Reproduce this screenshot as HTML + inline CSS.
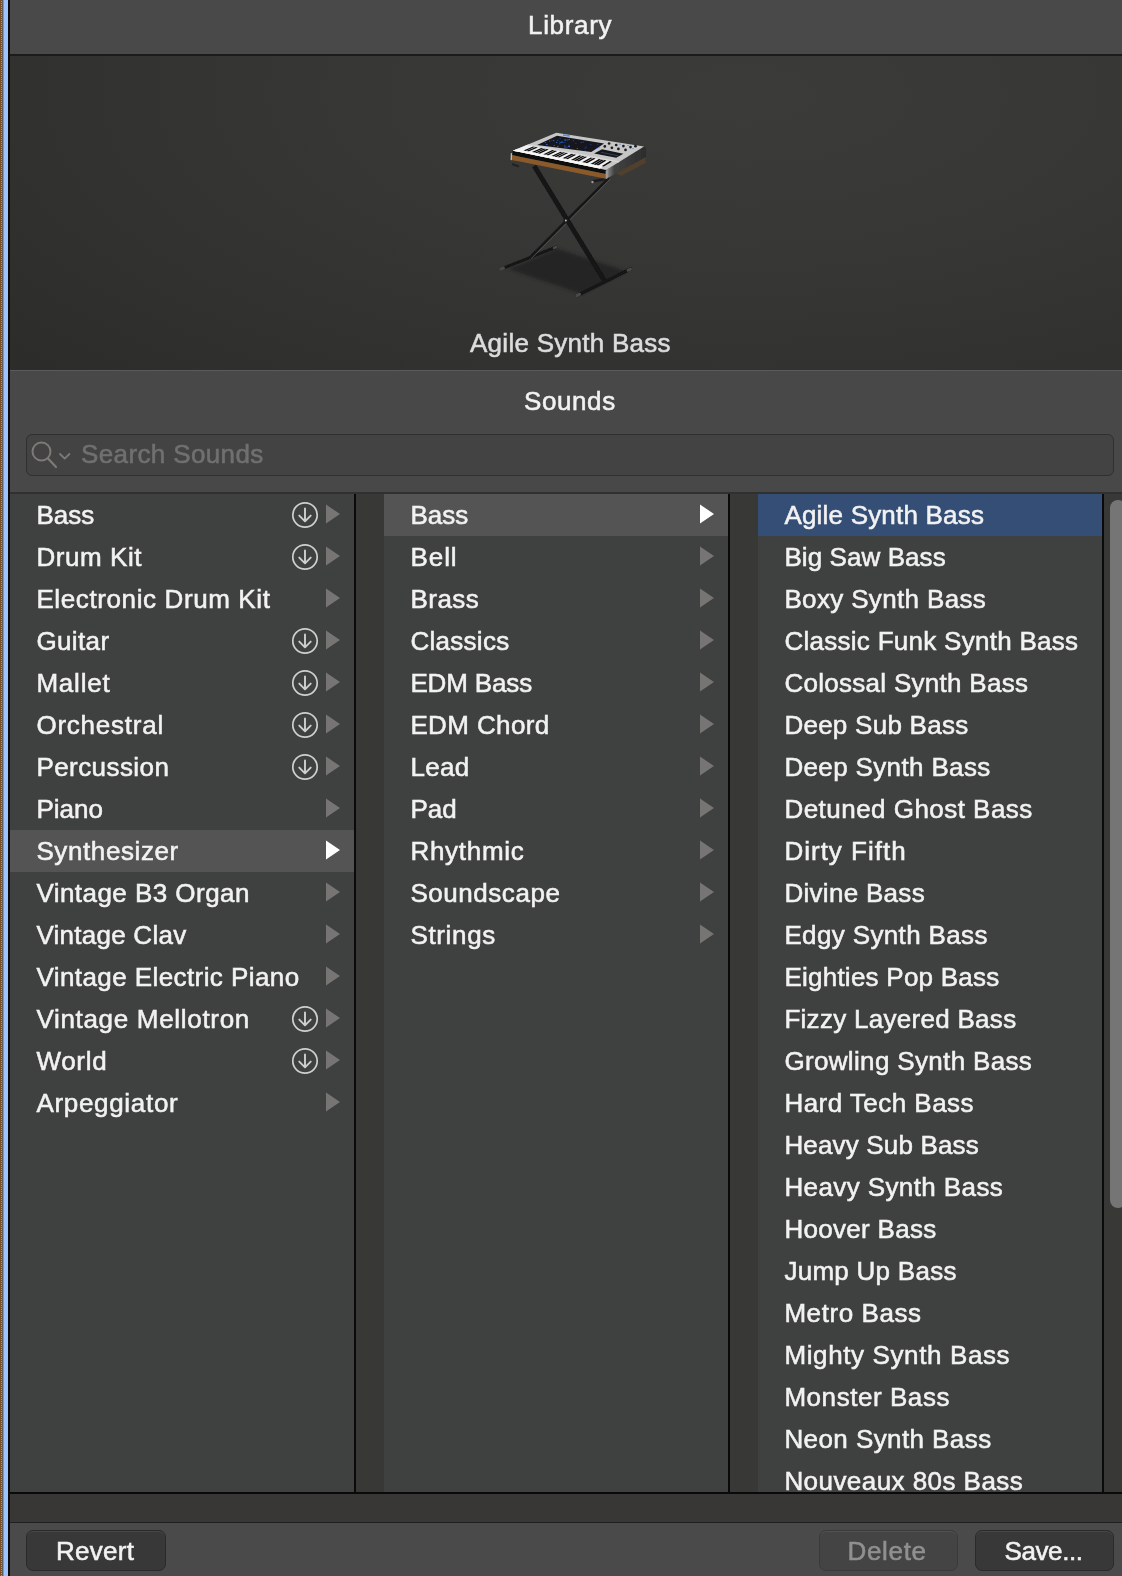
<!DOCTYPE html>
<html lang="en"><head><meta charset="utf-8"><title>Library</title>
<style>
html,body{margin:0;padding:0;background:#3f4040;}
body{width:1122px;height:1576px;position:relative;overflow:hidden;font-family:"Liberation Sans",sans-serif;font-size:26px;color:#f2f2f2;}
.t{white-space:nowrap;display:inline-block;-webkit-text-stroke:0.55px currentColor;}
.edge-brown{position:absolute;left:0;top:0;width:4px;height:1576px;background:linear-gradient(90deg,#7d4f22 0,#7d4f22 1px,transparent 1px),#7d4f22;}
.edge-brown:before{content:"";position:absolute;left:1px;top:0;width:1px;height:1576px;background:repeating-linear-gradient(180deg,#7d4f22 0,#7d4f22 1px,#a8927c 1px,#a8927c 2px);}
.edge-brown:after{content:"";position:absolute;left:2px;top:0;width:2px;height:1576px;background:linear-gradient(90deg,#5f5f5f 0,#5f5f5f 1px,#8e9199 1px,#8e9199 2px);}
.edge-blue{position:absolute;left:4px;top:0;width:4px;height:1576px;background:#9dc4fd;}
.edge-black{position:absolute;left:8px;top:0;width:2px;height:1576px;background:#0d0c0b;}
.panel{position:absolute;left:10px;top:0;width:1112px;height:1576px;overflow:hidden;will-change:transform;}
.titlebar{position:absolute;left:0;top:0;width:1112px;height:54px;background:#494949;border-bottom:2px solid #1b1b1b;}
.titlebar .t{position:absolute;left:518px;top:9.6px;line-height:30px;}
.hero{position:absolute;left:0;top:56px;width:1112px;height:314px;background:radial-gradient(ellipse 950px 400px at 66% 12%,#3b3b3a 0%,#373736 40%,#313130 75%,#2c2c2b 100%);}
.hero svg.synth{position:absolute;left:460px;top:44px;}
.patch{position:absolute;left:0;top:270px;width:1112px;height:34px;color:#dcdcdc;}
.patch .t{position:absolute;left:460px;top:0;line-height:34px;}
.sounds{position:absolute;left:0;top:370px;width:1112px;height:122px;background:#484848;border-top:1px solid #5a5a5a;box-sizing:border-box;}
.sounds .t{position:absolute;left:514px;top:15px;line-height:30px;}
.search{position:absolute;left:16px;top:434px;width:1086px;height:40px;border-radius:6px;background:#434343;border:1px solid #303030;box-sizing:content-box;}
.search .mag{position:absolute;left:3px;top:4px;}
.search .ph{position:absolute;left:54px;top:2px;line-height:34px;color:#707070;}
.lists{position:absolute;left:0;top:492px;width:1112px;height:1000px;background:#3f4040;border-top:2px solid #303030;box-sizing:border-box;overflow:hidden;}
.col{position:absolute;top:0;height:998px;background:#3f4040;}
.c1{left:0;width:344px;}
.c2{left:374px;width:344px;}
.c3{left:748px;width:344px;}
.row{position:relative;height:42px;width:344px;}
.row .t{position:absolute;left:26.4px;top:5px;line-height:32px;}
.row.sel{background:#545454;}
.row.selb{background:#354e75;}
.row .dl{position:absolute;left:281px;top:7px;}
.row .tri{position:absolute;left:316px;top:10px;}
.vline{position:absolute;top:0;width:2px;height:998px;background:#0a0a0a;}
.v1{left:344px}.v2{left:718px}.v3{left:1092px}
.gap{position:absolute;top:0;width:28px;height:998px;background:#383837;}
.g1{left:346px}.g2{left:720px}.g3{left:1094px;width:18px;}
.thumb{position:absolute;left:6px;top:6px;width:16px;height:708px;border-radius:8px;background:#757575;}
.hline{position:absolute;left:0;top:1492px;width:1112px;height:2px;background:#0a0a0a;}
.band{position:absolute;left:0;top:1494px;width:1112px;height:28px;background:#383736;}
.hline2{position:absolute;left:0;top:1522px;width:1112px;height:1px;background:#202020;}
.footer{position:absolute;left:0;top:1523px;width:1112px;height:53px;background:#4a4a4a;}
.btn{position:absolute;top:7px;height:41px;width:139px;border-radius:7px;background:#383838;border:1px solid #2a2a2a;box-sizing:border-box;box-shadow:0 1px 0 rgba(255,255,255,0.08) inset;}
.btn .t{position:absolute;top:3.8px;line-height:32px;}
.btn.dis{background:#444444;border-color:#3a3a3a;color:#909090;}
.b-revert{left:16px;width:140px;}
.b-delete{left:809px;}
.b-save{left:965px;}
.b-revert .t{left:29px}.b-delete .t{left:27.5px}.b-save .t{left:28.5px}

</style></head>
<body>
<div class="edge-brown"></div><div class="edge-blue"></div><div class="edge-black"></div>
<div class="panel">
<div class="titlebar"><span class="t" id="t-title" style="letter-spacing:0.667px">Library</span></div>
<div class="hero"><svg class="synth" width="220" height="220" viewBox="0 0 220 220"><defs><pattern id="dots" width="2" height="2" patternUnits="userSpaceOnUse"><rect width="2" height="2" fill="#2b2b2b"/><rect width="1" height="1" fill="#1c1c1c"/></pattern><linearGradient id="side" x1="0" y1="0" x2="1" y2="0"><stop offset="0" stop-color="#a8a8a8"/><stop offset="0.07" stop-color="#767676"/><stop offset="0.2" stop-color="#424242"/><stop offset="1" stop-color="#2c2c2c"/></linearGradient><filter id="soft" x="-5%" y="-5%" width="110%" height="110%"><feGaussianBlur stdDeviation="0.35"/></filter><filter id="sh" x="-10%" y="-10%" width="120%" height="120%"><feGaussianBlur stdDeviation="1.6"/></filter></defs><polygon points="38.5,169.1 87,148.4 156.9,171.3 111.3,194.1" fill="#222222" opacity="0.85" filter="url(#sh)"/><g filter="url(#soft)"><line x1="30.7" y1="169.1" x2="86.3" y2="147" stroke="#171717" stroke-width="3" stroke-linecap="round"/><line x1="30.7" y1="169.1" x2="33.5" y2="168" stroke="#484848" stroke-width="3" stroke-linecap="round"/><line x1="84" y1="147.9" x2="86.3" y2="147" stroke="#484848" stroke-width="2.6" stroke-linecap="round"/><line x1="139" y1="78" x2="59.9" y2="157.7" stroke="#151515" stroke-width="2.8"/><line x1="140.2" y1="79" x2="61.2" y2="158.6" stroke="#6a6a6a" stroke-width="0.7"/><line x1="64.2" y1="66" x2="134.8" y2="181.2" stroke="#131313" stroke-width="4.8"/><line x1="107" y1="195.5" x2="160.5" y2="169.1" stroke="#141414" stroke-width="3.4" stroke-linecap="round"/><line x1="107" y1="195.5" x2="109.5" y2="194.3" stroke="#484848" stroke-width="3.2" stroke-linecap="round"/><line x1="158" y1="170.3" x2="160.5" y2="169.1" stroke="#484848" stroke-width="3" stroke-linecap="round"/><circle cx="95.8" cy="120.6" r="2.6" fill="#1a1a1a"/><circle cx="95.8" cy="120.6" r="1" fill="#bdbdbd"/><line x1="42" y1="64" x2="49" y2="66.5" stroke="#222" stroke-width="2.2"/><line x1="122" y1="81.5" x2="138" y2="78.5" stroke="#1c1c1c" stroke-width="2.6"/><circle cx="122.5" cy="82" r="1.2" fill="#9a9a9a"/><polygon points="146,73 175.5,56 175.5,63 151,76" fill="#7a4a1e" opacity="0.38"/><polygon points="136.2,69.9 174,46.4 176,48.2 176,57 139,77.2 136.2,78.8" fill="url(#side)"/><polygon points="42.8,50.7 136.2,69.9 135.9,74.1 42.0,55.1" fill="#0e0e0e" /><polygon points="41.9,55.1 135.9,74.1 135.6,78.7 41.2,59.9" fill="#8b5a2b" /><polygon points="40.8,53.2 42.2,52.9 41.9,60.3 40.6,59.9" fill="#bdbdbd" /><polygon points="135.6,70.9 137.6,70.1 137.6,78.3 135.6,79.1" fill="#9c9c9c" /><polygon points="42.8,50.7 136.2,69.9 174.0,46.4 86.3,32.8" fill="#c6c6c6" /><polygon points="42.8,50.7 129.7,68.6 141.9,61.2 56.7,45.0" fill="#f0f0f0" /><polygon points="53.5,50.5 55.7,50.9 65.2,46.8 63.0,46.4" fill="#0c0c0c" /><polygon points="56.3,51.0 58.5,51.5 67.9,47.4 65.7,46.9" fill="#0c0c0c" /><polygon points="61.9,52.1 64.1,52.6 73.4,48.4 71.2,48.0" fill="#0c0c0c" /><polygon points="64.6,52.7 66.9,53.1 76.2,48.9 74.0,48.5" fill="#0c0c0c" /><polygon points="67.4,53.3 69.7,53.7 78.9,49.5 76.7,49.0" fill="#0c0c0c" /><polygon points="73.0,54.4 75.2,54.8 84.4,50.5 82.2,50.1" fill="#0c0c0c" /><polygon points="75.8,54.9 78.0,55.4 87.2,51.0 85.0,50.6" fill="#0c0c0c" /><polygon points="81.4,56.1 83.6,56.5 92.7,52.1 90.5,51.7" fill="#0c0c0c" /><polygon points="84.1,56.6 86.4,57.1 95.4,52.6 93.2,52.2" fill="#0c0c0c" /><polygon points="86.9,57.2 89.2,57.6 98.2,53.1 96.0,52.7" fill="#0c0c0c" /><polygon points="92.5,58.3 94.7,58.8 103.7,54.2 101.5,53.8" fill="#0c0c0c" /><polygon points="95.3,58.9 97.5,59.3 106.4,54.7 104.2,54.3" fill="#0c0c0c" /><polygon points="100.9,60.0 103.1,60.4 111.9,55.8 109.7,55.3" fill="#0c0c0c" /><polygon points="103.7,60.5 105.9,61.0 114.7,56.3 112.5,55.9" fill="#0c0c0c" /><polygon points="106.4,61.1 108.7,61.6 117.4,56.8 115.2,56.4" fill="#0c0c0c" /><polygon points="112.0,62.2 114.2,62.7 122.9,57.8 120.7,57.4" fill="#0c0c0c" /><polygon points="114.8,62.8 117.0,63.2 125.7,58.4 123.5,58.0" fill="#0c0c0c" /><polygon points="120.4,63.9 122.6,64.4 131.1,59.4 128.9,59.0" fill="#0c0c0c" /><polygon points="123.2,64.5 125.4,64.9 133.9,59.9 131.7,59.5" fill="#0c0c0c" /><polygon points="125.9,65.0 128.2,65.5 136.6,60.5 134.4,60.0" fill="#0c0c0c" /><polygon points="131.5,66.2 133.8,66.6 142.1,61.5 139.9,61.1" fill="#0c0c0c" /><polygon points="42.8,50.7 129.7,68.6 132.9,66.6 46.5,49.2" fill="#f6f6f6" /><polygon points="56.7,45.0 148.3,62.4 149.8,61.4 58.5,44.3" fill="#dadada" /><polygon points="67.1,45.0 87.0,35.7 134.1,43.5 121.3,52.1" fill="#12151c" /><rect x="83.5" y="44.9" width="1.3" height="0.8" fill="#3b7be0"/><rect x="96.2" y="46.7" width="1.3" height="0.8" fill="#2457b8"/><rect x="102.8" y="40.5" width="1.3" height="0.8" fill="#2457b8"/><rect x="88.8" y="41.7" width="1.3" height="0.8" fill="#1b3f8a"/><rect x="120.1" y="44.0" width="1.3" height="0.8" fill="#1b3f8a"/><rect x="93.9" y="39.0" width="1.3" height="0.8" fill="#1b3f8a"/><rect x="114.3" y="48.3" width="1.3" height="0.8" fill="#1b3f8a"/><rect x="96.7" y="40.0" width="1.3" height="0.8" fill="#1b3f8a"/><rect x="83.0" y="40.3" width="1.3" height="0.8" fill="#3b7be0"/><rect x="98.7" y="46.3" width="1.3" height="0.8" fill="#3b7be0"/><rect x="97.3" y="39.4" width="1.3" height="0.8" fill="#2457b8"/><rect x="114.4" y="49.9" width="1.3" height="0.8" fill="#1b3f8a"/><rect x="110.6" y="42.0" width="1.3" height="0.8" fill="#2457b8"/><rect x="85.9" y="42.3" width="1.3" height="0.8" fill="#1b3f8a"/><rect x="94.5" y="45.9" width="1.3" height="0.8" fill="#1b3f8a"/><rect x="94.3" y="40.2" width="1.3" height="0.8" fill="#2457b8"/><rect x="81.3" y="39.8" width="1.3" height="0.8" fill="#1b3f8a"/><rect x="105.2" y="43.2" width="1.3" height="0.8" fill="#1b3f8a"/><rect x="86.9" y="40.2" width="1.3" height="0.8" fill="#2457b8"/><rect x="94.1" y="45.5" width="1.3" height="0.8" fill="#3b7be0"/><rect x="89.1" y="43.4" width="1.3" height="0.8" fill="#2457b8"/><rect x="94.1" y="42.3" width="1.3" height="0.8" fill="#1b3f8a"/><rect x="75.8" y="44.2" width="1.3" height="0.8" fill="#2f6fe0"/><rect x="92.2" y="41.8" width="1.3" height="0.8" fill="#2f6fe0"/><rect x="89.5" y="38.2" width="1.3" height="0.8" fill="#1b3f8a"/><rect x="94.5" y="46.9" width="1.3" height="0.8" fill="#2457b8"/><rect x="127.1" y="44.0" width="1.3" height="0.8" fill="#1b3f8a"/><rect x="74.8" y="42.0" width="1.3" height="0.8" fill="#2f6fe0"/><rect x="115.3" y="46.7" width="1.3" height="0.8" fill="#2457b8"/><rect x="106.7" y="48.2" width="1.3" height="0.8" fill="#9a5f22"/><rect x="86.0" y="42.2" width="1.3" height="0.8" fill="#2f6fe0"/><rect x="91.1" y="41.5" width="1.3" height="0.8" fill="#2f6fe0"/><rect x="87.3" y="46.2" width="1.3" height="0.8" fill="#2457b8"/><rect x="98.4" y="44.7" width="1.3" height="0.8" fill="#1b3f8a"/><rect x="128.3" y="47.3" width="1.3" height="0.8" fill="#3b7be0"/><rect x="126.0" y="48.2" width="1.3" height="0.8" fill="#2f6fe0"/><rect x="76.5" y="44.3" width="1.3" height="0.8" fill="#2f6fe0"/><rect x="112.8" y="41.6" width="1.3" height="0.8" fill="#2457b8"/><rect x="79.0" y="40.7" width="1.3" height="0.8" fill="#2f6fe0"/><rect x="87.1" y="45.9" width="1.3" height="0.8" fill="#9a5f22"/><rect x="98.6" y="39.1" width="1.3" height="0.8" fill="#2f6fe0"/><rect x="98.0" y="45.7" width="1.3" height="0.8" fill="#3b7be0"/><rect x="98.5" y="45.9" width="1.3" height="0.8" fill="#3b7be0"/><rect x="95.0" y="39.5" width="1.3" height="0.8" fill="#2f6fe0"/><rect x="96.5" y="47.3" width="1.3" height="0.8" fill="#1b3f8a"/><rect x="90.2" y="42.1" width="1.3" height="0.8" fill="#2f6fe0"/><rect x="93" y="34.6" width="7" height="1.6" fill="#4f8df0" transform="rotate(9 96 35)"/><polygon points="124.1,53.5 132.0,49.2 153.4,53.8 146.2,57.8" fill="#15171c" /><line x1="131" y1="52.3" x2="148" y2="55.8" stroke="#3a4a66" stroke-width="0.8"/><circle cx="139.1" cy="43.5" r="1.35" fill="#1b1b1b"/><circle cx="146.2" cy="45" r="1.35" fill="#1b1b1b"/><circle cx="153.4" cy="46.1" r="1.35" fill="#1b1b1b"/><circle cx="160.5" cy="47.1" r="1.35" fill="#1b1b1b"/><circle cx="165.5" cy="46.2" r="1.35" fill="#1b1b1b"/><circle cx="134.8" cy="46.4" r="1.35" fill="#1b1b1b"/><circle cx="141.9" cy="47.8" r="1.35" fill="#1b1b1b"/><circle cx="148.4" cy="48.9" r="1.35" fill="#1b1b1b"/><circle cx="155.5" cy="49.9" r="1.35" fill="#1b1b1b"/><circle cx="150" cy="44.2" r="0.6" fill="#3b82f6"/><circle cx="158" cy="45.4" r="0.6" fill="#3b82f6"/><circle cx="163" cy="48.6" r="0.6" fill="#3b82f6"/></g></svg><div class="patch"><span class="t" id="t-patch" style="letter-spacing:0.267px">Agile Synth Bass</span></div></div>
<div class="sounds"><span class="t" id="t-sounds" style="letter-spacing:0.600px">Sounds</span></div>
<div class="search"><svg class="mag" width="44" height="32" viewBox="0 0 44 32"><circle cx="11.5" cy="12.5" r="9" fill="none" stroke="#7d7a78" stroke-width="2"/><path d="M18 19.5 L26 28" stroke="#7d7a78" stroke-width="2.2" stroke-linecap="round" fill="none"/><path d="M30 15 L34.7 19.6 L39.4 15" stroke="#7d7a78" stroke-width="1.8" fill="none" stroke-linecap="round" stroke-linejoin="round"/></svg><span class="ph t" id="t-ph" style="letter-spacing:0.374px">Search Sounds</span></div>
<div class="lists">
<div class="col c1">
<div class="row"><span class="t" id="a0" style="letter-spacing:0.000px">Bass</span><svg class="dl" width="28" height="28" viewBox="0 0 28 28"><circle cx="14" cy="14" r="12.2" fill="none" stroke="#cfcfcf" stroke-width="1.7"/><path d="M14 7.5 V20 M8.3 14.6 L14 20.3 L19.7 14.6" fill="none" stroke="#cfcfcf" stroke-width="1.9" stroke-linecap="round" stroke-linejoin="round"/></svg><svg class="tri" width="14" height="20" viewBox="0 0 14 20"><path d="M0 0.5 L14 10 L0 19.5 Z" fill="#777474"/></svg></div>
<div class="row"><span class="t" id="a1" style="letter-spacing:0.572px">Drum Kit</span><svg class="dl" width="28" height="28" viewBox="0 0 28 28"><circle cx="14" cy="14" r="12.2" fill="none" stroke="#cfcfcf" stroke-width="1.7"/><path d="M14 7.5 V20 M8.3 14.6 L14 20.3 L19.7 14.6" fill="none" stroke="#cfcfcf" stroke-width="1.9" stroke-linecap="round" stroke-linejoin="round"/></svg><svg class="tri" width="14" height="20" viewBox="0 0 14 20"><path d="M0 0.5 L14 10 L0 19.5 Z" fill="#777474"/></svg></div>
<div class="row"><span class="t" id="a2" style="letter-spacing:0.612px">Electronic Drum Kit</span><svg class="tri" width="14" height="20" viewBox="0 0 14 20"><path d="M0 0.5 L14 10 L0 19.5 Z" fill="#777474"/></svg></div>
<div class="row"><span class="t" id="a3" style="letter-spacing:0.380px">Guitar</span><svg class="dl" width="28" height="28" viewBox="0 0 28 28"><circle cx="14" cy="14" r="12.2" fill="none" stroke="#cfcfcf" stroke-width="1.7"/><path d="M14 7.5 V20 M8.3 14.6 L14 20.3 L19.7 14.6" fill="none" stroke="#cfcfcf" stroke-width="1.9" stroke-linecap="round" stroke-linejoin="round"/></svg><svg class="tri" width="14" height="20" viewBox="0 0 14 20"><path d="M0 0.5 L14 10 L0 19.5 Z" fill="#777474"/></svg></div>
<div class="row"><span class="t" id="a4" style="letter-spacing:0.800px">Mallet</span><svg class="dl" width="28" height="28" viewBox="0 0 28 28"><circle cx="14" cy="14" r="12.2" fill="none" stroke="#cfcfcf" stroke-width="1.7"/><path d="M14 7.5 V20 M8.3 14.6 L14 20.3 L19.7 14.6" fill="none" stroke="#cfcfcf" stroke-width="1.9" stroke-linecap="round" stroke-linejoin="round"/></svg><svg class="tri" width="14" height="20" viewBox="0 0 14 20"><path d="M0 0.5 L14 10 L0 19.5 Z" fill="#777474"/></svg></div>
<div class="row"><span class="t" id="a5" style="letter-spacing:0.766px">Orchestral</span><svg class="dl" width="28" height="28" viewBox="0 0 28 28"><circle cx="14" cy="14" r="12.2" fill="none" stroke="#cfcfcf" stroke-width="1.7"/><path d="M14 7.5 V20 M8.3 14.6 L14 20.3 L19.7 14.6" fill="none" stroke="#cfcfcf" stroke-width="1.9" stroke-linecap="round" stroke-linejoin="round"/></svg><svg class="tri" width="14" height="20" viewBox="0 0 14 20"><path d="M0 0.5 L14 10 L0 19.5 Z" fill="#777474"/></svg></div>
<div class="row"><span class="t" id="a6" style="letter-spacing:0.433px">Percussion</span><svg class="dl" width="28" height="28" viewBox="0 0 28 28"><circle cx="14" cy="14" r="12.2" fill="none" stroke="#cfcfcf" stroke-width="1.7"/><path d="M14 7.5 V20 M8.3 14.6 L14 20.3 L19.7 14.6" fill="none" stroke="#cfcfcf" stroke-width="1.9" stroke-linecap="round" stroke-linejoin="round"/></svg><svg class="tri" width="14" height="20" viewBox="0 0 14 20"><path d="M0 0.5 L14 10 L0 19.5 Z" fill="#777474"/></svg></div>
<div class="row"><span class="t" id="a7" style="letter-spacing:0.000px">Piano</span><svg class="tri" width="14" height="20" viewBox="0 0 14 20"><path d="M0 0.5 L14 10 L0 19.5 Z" fill="#777474"/></svg></div>
<div class="row sel"><span class="t" id="a8" style="letter-spacing:0.600px">Synthesizer</span><svg class="tri" width="14" height="20" viewBox="0 0 14 20"><path d="M0 0.5 L14 10 L0 19.5 Z" fill="#ffffff"/></svg></div>
<div class="row"><span class="t" id="a9" style="letter-spacing:0.454px">Vintage B3 Organ</span><svg class="tri" width="14" height="20" viewBox="0 0 14 20"><path d="M0 0.5 L14 10 L0 19.5 Z" fill="#777474"/></svg></div>
<div class="row"><span class="t" id="a10" style="letter-spacing:0.255px">Vintage Clav</span><svg class="tri" width="14" height="20" viewBox="0 0 14 20"><path d="M0 0.5 L14 10 L0 19.5 Z" fill="#777474"/></svg></div>
<div class="row"><span class="t" id="a11" style="letter-spacing:0.420px">Vintage Electric Piano</span><svg class="tri" width="14" height="20" viewBox="0 0 14 20"><path d="M0 0.5 L14 10 L0 19.5 Z" fill="#777474"/></svg></div>
<div class="row"><span class="t" id="a12" style="letter-spacing:0.688px">Vintage Mellotron</span><svg class="dl" width="28" height="28" viewBox="0 0 28 28"><circle cx="14" cy="14" r="12.2" fill="none" stroke="#cfcfcf" stroke-width="1.7"/><path d="M14 7.5 V20 M8.3 14.6 L14 20.3 L19.7 14.6" fill="none" stroke="#cfcfcf" stroke-width="1.9" stroke-linecap="round" stroke-linejoin="round"/></svg><svg class="tri" width="14" height="20" viewBox="0 0 14 20"><path d="M0 0.5 L14 10 L0 19.5 Z" fill="#777474"/></svg></div>
<div class="row"><span class="t" id="a13" style="letter-spacing:0.725px">World</span><svg class="dl" width="28" height="28" viewBox="0 0 28 28"><circle cx="14" cy="14" r="12.2" fill="none" stroke="#cfcfcf" stroke-width="1.7"/><path d="M14 7.5 V20 M8.3 14.6 L14 20.3 L19.7 14.6" fill="none" stroke="#cfcfcf" stroke-width="1.9" stroke-linecap="round" stroke-linejoin="round"/></svg><svg class="tri" width="14" height="20" viewBox="0 0 14 20"><path d="M0 0.5 L14 10 L0 19.5 Z" fill="#777474"/></svg></div>
<div class="row"><span class="t" id="a14" style="letter-spacing:0.690px">Arpeggiator</span><svg class="tri" width="14" height="20" viewBox="0 0 14 20"><path d="M0 0.5 L14 10 L0 19.5 Z" fill="#777474"/></svg></div>
</div><div class="vline v1"></div><div class="gap g1"></div>
<div class="col c2">
<div class="row sel"><span class="t" id="b0" style="letter-spacing:0.000px">Bass</span><svg class="tri" width="14" height="20" viewBox="0 0 14 20"><path d="M0 0.5 L14 10 L0 19.5 Z" fill="#ffffff"/></svg></div>
<div class="row"><span class="t" id="b1" style="letter-spacing:0.967px">Bell</span><svg class="tri" width="14" height="20" viewBox="0 0 14 20"><path d="M0 0.5 L14 10 L0 19.5 Z" fill="#777474"/></svg></div>
<div class="row"><span class="t" id="b2" style="letter-spacing:0.500px">Brass</span><svg class="tri" width="14" height="20" viewBox="0 0 14 20"><path d="M0 0.5 L14 10 L0 19.5 Z" fill="#777474"/></svg></div>
<div class="row"><span class="t" id="b3" style="letter-spacing:0.286px">Classics</span><svg class="tri" width="14" height="20" viewBox="0 0 14 20"><path d="M0 0.5 L14 10 L0 19.5 Z" fill="#777474"/></svg></div>
<div class="row"><span class="t" id="b4" style="letter-spacing:-0.143px">EDM Bass</span><svg class="tri" width="14" height="20" viewBox="0 0 14 20"><path d="M0 0.5 L14 10 L0 19.5 Z" fill="#777474"/></svg></div>
<div class="row"><span class="t" id="b5" style="letter-spacing:0.375px">EDM Chord</span><svg class="tri" width="14" height="20" viewBox="0 0 14 20"><path d="M0 0.5 L14 10 L0 19.5 Z" fill="#777474"/></svg></div>
<div class="row"><span class="t" id="b6" style="letter-spacing:0.366px">Lead</span><svg class="tri" width="14" height="20" viewBox="0 0 14 20"><path d="M0 0.5 L14 10 L0 19.5 Z" fill="#777474"/></svg></div>
<div class="row"><span class="t" id="b7" style="letter-spacing:0.000px">Pad</span><svg class="tri" width="14" height="20" viewBox="0 0 14 20"><path d="M0 0.5 L14 10 L0 19.5 Z" fill="#777474"/></svg></div>
<div class="row"><span class="t" id="b8" style="letter-spacing:0.728px">Rhythmic</span><svg class="tri" width="14" height="20" viewBox="0 0 14 20"><path d="M0 0.5 L14 10 L0 19.5 Z" fill="#777474"/></svg></div>
<div class="row"><span class="t" id="b9" style="letter-spacing:0.544px">Soundscape</span><svg class="tri" width="14" height="20" viewBox="0 0 14 20"><path d="M0 0.5 L14 10 L0 19.5 Z" fill="#777474"/></svg></div>
<div class="row"><span class="t" id="b10" style="letter-spacing:0.667px">Strings</span><svg class="tri" width="14" height="20" viewBox="0 0 14 20"><path d="M0 0.5 L14 10 L0 19.5 Z" fill="#777474"/></svg></div>
</div><div class="vline v2"></div><div class="gap g2"></div>
<div class="col c3">
<div class="row selb"><span class="t" id="c0" style="letter-spacing:0.200px">Agile Synth Bass</span></div>
<div class="row"><span class="t" id="c1" style="letter-spacing:0.081px">Big Saw Bass</span></div>
<div class="row"><span class="t" id="c2" style="letter-spacing:0.350px">Boxy Synth Bass</span></div>
<div class="row"><span class="t" id="c3" style="letter-spacing:0.278px">Classic Funk Synth Bass</span></div>
<div class="row"><span class="t" id="c4" style="letter-spacing:0.284px">Colossal Synth Bass</span></div>
<div class="row"><span class="t" id="c5" style="letter-spacing:0.258px">Deep Sub Bass</span></div>
<div class="row"><span class="t" id="c6" style="letter-spacing:0.357px">Deep Synth Bass</span></div>
<div class="row"><span class="t" id="c7" style="letter-spacing:0.471px">Detuned Ghost Bass</span></div>
<div class="row"><span class="t" id="c8" style="letter-spacing:1.010px">Dirty Fifth</span></div>
<div class="row"><span class="t" id="c9" style="letter-spacing:0.300px">Divine Bass</span></div>
<div class="row"><span class="t" id="c10" style="letter-spacing:0.364px">Edgy Synth Bass</span></div>
<div class="row"><span class="t" id="c11" style="letter-spacing:0.244px">Eighties Pop Bass</span></div>
<div class="row"><span class="t" id="c12" style="letter-spacing:0.288px">Fizzy Layered Bass</span></div>
<div class="row"><span class="t" id="c13" style="letter-spacing:0.339px">Growling Synth Bass</span></div>
<div class="row"><span class="t" id="c14" style="letter-spacing:0.470px">Hard Tech Bass</span></div>
<div class="row"><span class="t" id="c15" style="letter-spacing:0.162px">Heavy Sub Bass</span></div>
<div class="row"><span class="t" id="c16" style="letter-spacing:0.400px">Heavy Synth Bass</span></div>
<div class="row"><span class="t" id="c17" style="letter-spacing:0.300px">Hoover Bass</span></div>
<div class="row"><span class="t" id="c18" style="letter-spacing:0.273px">Jump Up Bass</span></div>
<div class="row"><span class="t" id="c19" style="letter-spacing:0.567px">Metro Bass</span></div>
<div class="row"><span class="t" id="c20" style="letter-spacing:0.619px">Mighty Synth Bass</span></div>
<div class="row"><span class="t" id="c21" style="letter-spacing:0.555px">Monster Bass</span></div>
<div class="row"><span class="t" id="c22" style="letter-spacing:0.421px">Neon Synth Bass</span></div>
<div class="row"><span class="t" id="c23" style="letter-spacing:0.444px">Nouveaux 80s Bass</span></div>
</div><div class="vline v3"></div><div class="gap g3"><div class="thumb"></div></div>
</div>
<div class="hline"></div><div class="band"></div><div class="hline2"></div>
<div class="footer"><div class="btn b-revert"><span class="t" id="t-revert" style="letter-spacing:0.280px">Revert</span></div><div class="btn dis b-delete"><span class="t" id="t-delete" style="letter-spacing:0.680px">Delete</span></div><div class="btn b-save"><span class="t" id="t-save" style="letter-spacing:-0.400px">Save...</span></div></div>
</div>
</body></html>
